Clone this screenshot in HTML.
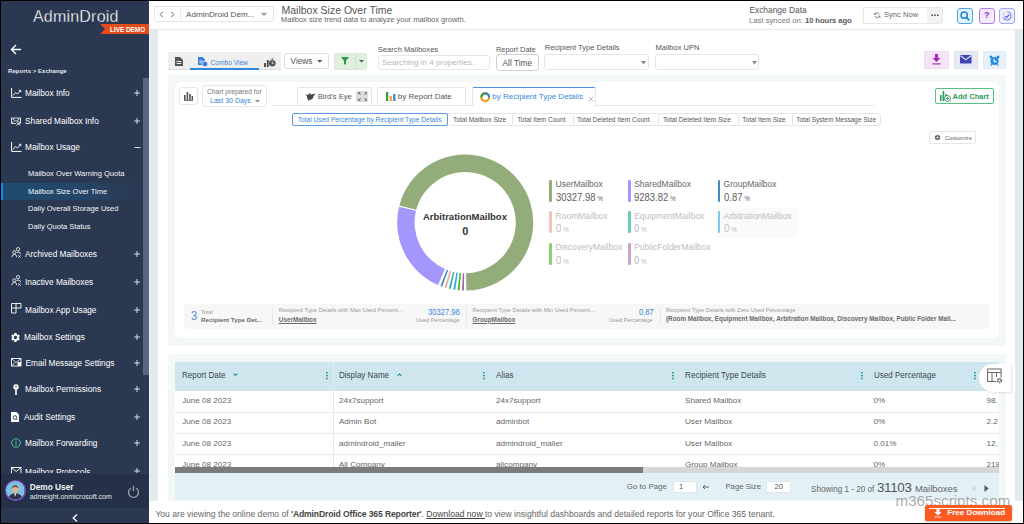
<!DOCTYPE html>
<html><head><meta charset="utf-8">
<style>
*{box-sizing:border-box;margin:0;padding:0}
html,body{width:1024px;height:524px;overflow:hidden;background:#fff;font-family:"Liberation Sans",sans-serif}
#root{position:absolute;left:0;top:0;width:1024px;height:524px;background:#fff;overflow:hidden}
.a{position:absolute}
.t{position:absolute;white-space:nowrap;line-height:1}
#side{position:absolute;left:0;top:0;width:149px;height:524px;background:#2b3851;overflow:hidden}
</style></head><body>
<div id="root">
<!-- MAIN -->
<div class="a" style="left:149px;top:29px;width:1px;height:472px;background:#eef3f5"></div><div class="a" style="left:150px;top:29px;width:8px;height:472px;background:#e2eaed"></div>
<div class="a" style="left:1015px;top:29px;width:8px;height:472px;background:#e3eaed"></div>
<!-- HEADER -->
<div class="a" style="left:149px;top:0;width:874px;height:29px;background:#fff;box-shadow:0 1px 1px #e6e9ec"></div>
<div class="a" style="left:154px;top:6px;width:120px;height:16px;border:1px solid #e4e4e4;border-radius:2px;background:#fff"></div>
<div class="a" style="left:180px;top:7px;width:1px;height:14px;background:#ececec"></div>
<svg class="a" style="left:159px;top:11px" width="5" height="7"><path d="M3.8 0.8L1.2 3.5L3.8 6.2" stroke="#666" stroke-width="1" fill="none"/></svg>
<svg class="a" style="left:170px;top:11px" width="5" height="7"><path d="M1.2 0.8L3.8 3.5L1.2 6.2" stroke="#666" stroke-width="1" fill="none"/></svg>
<div class="t" style="left:186px;top:11px;font-size:8.1px;color:#555">AdminDroid Dem...</div>
<svg class="a" style="left:261px;top:13px" width="6" height="4"><path d="M0 0H6L3 3Z" fill="#999"/></svg>
<div class="t" style="left:281.5px;top:4.8px;font-size:10.5px;color:#555">Mailbox Size Over Time</div>
<div class="t" style="left:281px;top:16.2px;font-size:7.5px;color:#666">Mailbox size trend data to analyze your mailbox growth.</div>
<div class="t" style="left:749.4px;top:6.2px;font-size:8.4px;color:#555">Exchange Data</div>
<div class="t" style="left:749px;top:17.4px;font-size:7.7px;color:#777">Last synced on: <b style="color:#5a5a5a;letter-spacing:-0.1px">10 hours ago</b></div>
<div class="a" style="left:863px;top:7px;width:80px;height:17px;border:1px solid #e6e6e6;border-radius:2px;background:#fff"></div>
<div class="a" style="left:927px;top:8px;width:15px;height:15px;background:#f2f2f2"></div>
<svg class="a" style="left:874px;top:12px" width="6.5" height="6.5"><path d="M5.6 2.4A2.6 2.6 0 0 0 1 2.2M0.9 4.1A2.6 2.6 0 0 0 5.5 4.3" stroke="#777" stroke-width="0.9" fill="none"/><path d="M0.6 0.6V2.5H2.4M5.9 5.9V4H4.1" stroke="#777" stroke-width="0.8" fill="none"/></svg>
<div class="t" style="left:884px;top:10.8px;font-size:7.6px;color:#666">Sync Now</div>
<svg class="a" style="left:931px;top:14px" width="8" height="3"><circle cx="1.2" cy="1.2" r="0.9" fill="#555"/><circle cx="4" cy="1.2" r="0.9" fill="#555"/><circle cx="6.8" cy="1.2" r="0.9" fill="#555"/></svg>
<div class="a" style="left:957px;top:8px;width:16px;height:16px;border:1px solid #4aa6df;border-radius:3px;background:#e4f2fb"></div>
<svg class="a" style="left:960px;top:11px" width="10" height="10"><circle cx="4.2" cy="4.2" r="3.1" stroke="#1a86cf" stroke-width="1.5" fill="none"/><path d="M6.5 6.5L9.3 9.3" stroke="#1a86cf" stroke-width="1.7"/></svg>
<div class="a" style="left:979px;top:8px;width:16px;height:16px;border:1px solid #b57ee8;border-radius:3px;background:#f5ebfd"></div>
<div class="t" style="left:984px;top:10.8px;font-size:9px;font-weight:700;color:#8a2be2">?</div>
<div class="a" style="left:999px;top:8px;width:16px;height:16px;border:1px solid #a3a6f2;border-radius:3px;background:#eff0fe"></div>
<svg class="a" style="left:1002px;top:11px" width="10" height="10"><path d="M5 1A4 4 0 1 1 1.3 6.5" stroke="#7c80ea" stroke-width="1.1" fill="none"/><path d="M1.1 4.2A4 4 0 0 1 3 1.5" stroke="#9a9df0" stroke-width="1.1" fill="none" stroke-dasharray="0.9 0.9"/><path d="M3 5.1L4.5 6.6L7.2 3.8" stroke="#5b60dc" stroke-width="1.3" fill="none"/></svg>

<!-- TOOLBAR -->
<div class="a" style="left:168px;top:52px;width:113px;height:18px;background:#efefef;border-bottom:1px solid #dcdcdc"></div>
<div class="a" style="left:190px;top:68px;width:69px;height:2px;background:#2f86de"></div>
<svg class="a" style="left:175px;top:57px" width="8" height="9"><path d="M0 0H5L8 3V9H0Z" fill="#555"/><rect x="1.6" y="4" width="4.8" height="1" fill="#efefef"/><rect x="1.6" y="6" width="4.8" height="1" fill="#efefef"/></svg>
<svg class="a" style="left:198px;top:57px" width="10" height="10"><path d="M0 0H4.5L7 2.5V8H0Z" fill="#3b7fd6"/><circle cx="7" cy="7" r="2.8" fill="#3b7fd6" stroke="#efefef" stroke-width="0.8"/><rect x="1.3" y="3.5" width="3.2" height="0.9" fill="#efefef"/><rect x="1.3" y="5.3" width="2.5" height="0.9" fill="#efefef"/></svg>
<div class="t" style="left:210.6px;top:59.8px;font-size:6.6px;color:#3d87d9">Combo View</div>
<svg class="a" style="left:264px;top:57px" width="12" height="10"><rect x="0" y="6" width="2" height="4" fill="#555"/><rect x="2.8" y="3" width="2" height="7" fill="#555"/><circle cx="8.3" cy="6.2" r="3.3" fill="#555"/><path d="M8.3 4.3V6.4H9.8" stroke="#efefef" stroke-width="0.8" fill="none"/><rect x="7.5" y="1.4" width="1.6" height="1.2" fill="#555"/></svg>
<div class="a" style="left:283.5px;top:52.5px;width:45px;height:16px;border:1px solid #e0e0e0;border-radius:2px;background:#fff"></div>
<div class="t" style="left:290.5px;top:57px;font-size:8.3px;color:#555">Views</div>
<svg class="a" style="left:316.5px;top:59.5px" width="6" height="4"><path d="M0 0H5.5L2.75 2.8Z" fill="#555"/></svg>
<div class="a" style="left:334px;top:52.5px;width:33px;height:17px;background:#e0f0df;border:1px solid #d8ead6;border-radius:2px"></div>
<div class="a" style="left:355px;top:53px;width:1px;height:16px;background:#cfe3cd"></div>
<svg class="a" style="left:341px;top:57px" width="8" height="8"><path d="M0 0H8L5 3.8V8L3 6.8V3.8Z" fill="#2b9a3a"/></svg>
<svg class="a" style="left:359px;top:60px" width="5" height="3"><path d="M0 0H5L2.5 2.5Z" fill="#555"/></svg>

<div class="t" style="left:377.8px;top:46.4px;font-size:7.6px;color:#555">Search Mailboxes</div>
<div class="a" style="left:378px;top:55px;width:111.5px;height:15.4px;border:1px solid #e6e6e6;border-radius:3px;background:#fff"></div>
<div class="t" style="left:382px;top:59.3px;font-size:8.1px;color:#b8b8b8">Searching in 4 properties.</div>
<div class="t" style="left:496px;top:45.8px;font-size:7.35px;color:#555">Report Date</div>
<div class="a" style="left:495.5px;top:54.4px;width:43px;height:16.5px;border:1px solid #d0d0d0;border-radius:3px;background:#fff"></div>
<div class="t" style="left:502.5px;top:58.5px;font-size:8.3px;color:#555">All Time</div>
<div class="t" style="left:544.7px;top:43.8px;font-size:7.55px;color:#555">Recipient Type Details</div>
<div class="a" style="left:544.4px;top:54.4px;width:105px;height:16px;border:1px solid #e6e6e6;border-radius:3px;background:#fff"></div>
<svg class="a" style="left:641px;top:61px" width="5" height="4"><path d="M0 0H5L2.5 3.5Z" fill="#888"/></svg>
<div class="t" style="left:655.6px;top:43.8px;font-size:7.5px;color:#555">Mailbox UPN</div>
<div class="a" style="left:655.3px;top:54.4px;width:104px;height:16px;border:1px solid #e6e6e6;border-radius:3px;background:#fff"></div>
<svg class="a" style="left:751.5px;top:61px" width="5" height="4"><path d="M0 0H5L2.5 3.5Z" fill="#888"/></svg>

<div class="a" style="left:924.3px;top:51px;width:24.6px;height:17.6px;background:#f5e4f8;border:1px solid #efdcf2;border-radius:1px"></div>
<svg class="a" style="left:932px;top:54px" width="9" height="11"><path d="M3 0H6V4H8.5L4.5 8L0.5 4H3Z" fill="#a42bb6"/><rect x="0.5" y="9.3" width="8" height="1.2" fill="#a42bb6"/></svg>
<div class="a" style="left:954px;top:51px;width:23.8px;height:17.6px;background:#e7e8f5;border:1px solid #dfe0f0;border-radius:1px"></div>
<svg class="a" style="left:960px;top:55px" width="12" height="9"><rect x="0" y="0" width="11.5" height="8.5" rx="0.8" fill="#3d45b5"/><path d="M0.5 0.8L5.75 4.6L11 0.8" stroke="#e7e8f5" stroke-width="1.1" fill="none"/></svg>
<div class="a" style="left:982.6px;top:51px;width:23.4px;height:17.6px;background:#e6f1fb;border:1px solid #deebf7;border-radius:1px"></div>
<svg class="a" style="left:988.5px;top:54.5px" width="11" height="11"><circle cx="5.5" cy="6" r="4.1" fill="#2a8ae2"/><circle cx="2" cy="2" r="1.5" fill="#2a8ae2"/><circle cx="9" cy="2" r="1.5" fill="#2a8ae2"/><path d="M5.2 3.8V6.6H7.6" stroke="#e6f1fb" stroke-width="1.3" fill="none"/><path d="M2.8 9.3L1.8 10.5M8.2 9.3L9.2 10.5" stroke="#2a8ae2" stroke-width="1.2"/></svg>

<!-- CHART CARD -->
<div class="a" style="left:168px;top:75px;width:838px;height:271px;background:#f3f7f8;border-radius:1px"></div>
<div class="a" style="left:175px;top:82px;width:824px;height:256px;background:#fff;border-radius:6px"></div>
<div class="a" style="left:179px;top:87.3px;width:19px;height:17.5px;border:1px solid #e6e6e6;border-radius:3px;background:#fff"></div>
<svg class="a" style="left:184px;top:91px" width="9" height="10"><rect x="0" y="4" width="1.6" height="5" fill="#555"/><rect x="2.6" y="1" width="1.6" height="8" fill="#555"/><rect x="5.2" y="3" width="1.6" height="6" fill="#555"/><rect x="7.6" y="5" width="1.4" height="4" fill="#555"/><rect x="0" y="9" width="9" height="0.8" fill="#555"/></svg>
<div class="a" style="left:201.5px;top:85.3px;width:65.5px;height:21.4px;border:1px solid #e8e8e8;border-radius:3px;background:#fff"></div>
<div class="t" style="left:207px;top:88.5px;font-size:6.7px;color:#777">Chart prepared for</div>
<div class="t" style="left:210px;top:96.6px;font-size:7px;color:#3d87d9">Last 30 Days</div>
<svg class="a" style="left:255px;top:99.5px" width="5" height="3"><path d="M0 0H5L2.5 2.5Z" fill="#888"/></svg>
<div class="a" style="left:271px;top:105px;width:604px;height:1px;background:#e6e6e6"></div>
<div class="a" style="left:296.6px;top:86.6px;width:75px;height:18.4px;border:1px solid #e6e6e6;border-bottom:none;border-radius:2px 2px 0 0;background:#fff"></div>
<svg class="a" style="left:304.5px;top:91.5px" width="11" height="9"><path d="M0 2.5L3 3L4.5 1L6 2.5L10.5 1.5L8.5 4.5Q8 7.5 4.5 8L3.5 9L3 7.5Q1.5 6 2 4Z" fill="#4a4a4a"/></svg>
<div class="t" style="left:317.8px;top:92.8px;font-size:7.6px;color:#555">Bird's Eye</div>
<div class="a" style="left:356.4px;top:91px;width:11.4px;height:10.6px;background:#dedede;border-radius:1px"></div>
<svg class="a" style="left:357.5px;top:92px" width="9" height="9"><path d="M0.8 0.8L3 3M8.2 0.8L6 3M0.8 8.2L3 6M8.2 8.2L6 6" stroke="#777" stroke-width="0.9"/><path d="M0.5 0.5H2.5M0.5 0.5V2.5M8.5 0.5H6.5M8.5 0.5V2.5M0.5 8.5H2.5M0.5 8.5V6.5M8.5 8.5H6.5M8.5 8.5V6.5" stroke="#777" stroke-width="0.9"/></svg>
<div class="a" style="left:377px;top:86.6px;width:89px;height:18.4px;border:1px solid #e6e6e6;border-bottom:none;border-radius:2px 2px 0 0;background:#fff"></div>
<svg class="a" style="left:385.6px;top:91px" width="10" height="10"><rect x="0" y="1" width="2.2" height="9" fill="#2e9c3c"/><rect x="3.6" y="5" width="2.2" height="5" fill="#f59a23"/><rect x="7.2" y="3" width="2.2" height="7" fill="#2f86de"/></svg>
<div class="t" style="left:397.8px;top:92.8px;font-size:8px;color:#555">by Report Date</div>
<div class="a" style="left:471.7px;top:87px;width:124.5px;height:19px;border:1px solid #e6e6e6;border-top:1.6px solid #4a90e2;border-bottom:none;border-radius:2px 2px 0 0;background:#fff"></div>
<svg class="a" style="left:479.8px;top:92px" width="10.5" height="10.5"><circle cx="5.25" cy="5.25" r="3.9" stroke="#f59a23" stroke-width="2.2" fill="none"/><path d="M1.35 5.25A3.9 3.9 0 0 1 5.25 1.35" stroke="#2e9c3c" stroke-width="2.2" fill="none"/><path d="M5.25 1.35A3.9 3.9 0 0 1 9.15 5.25" stroke="#2f86de" stroke-width="2.2" fill="none"/></svg>
<div class="t" style="left:492.3px;top:93.3px;font-size:8.05px;color:#3d87d9">by Recipient Type Details</div>
<svg class="a" style="left:587.5px;top:95.5px" width="6" height="6"><path d="M0.8 0.8L5.2 5.2M5.2 0.8L0.8 5.2" stroke="#aaa" stroke-width="0.8"/></svg>
<div class="a" style="left:935.4px;top:87.5px;width:58.6px;height:16.5px;border:1px solid #56c27f;border-radius:2px;background:#fff"></div>
<svg class="a" style="left:940px;top:90px" width="11" height="12"><rect x="0" y="5" width="1.6" height="6" fill="#2d9b57"/><rect x="2.6" y="1" width="1.6" height="10" fill="#2d9b57"/><rect x="5.2" y="4" width="1.6" height="4" fill="#2d9b57"/><circle cx="7.5" cy="8.5" r="3" fill="#fff" stroke="#2d9b57" stroke-width="1"/><path d="M7.5 7V10M6 8.5H9" stroke="#2d9b57" stroke-width="0.9"/></svg>
<div class="t" style="left:952.6px;top:93.2px;font-size:7.5px;font-weight:700;color:#2d9b57">Add Chart</div>

<!-- metric tabs -->
<div class="a" style="left:292px;top:113.2px;width:589.3px;height:12.6px;border:1px solid #e6e6e6;border-radius:3px;background:#fff"></div>
<div class="a" style="left:292px;top:113.2px;width:155.7px;height:12.6px;border:1px solid #5a9be6;border-radius:2px;background:#fff"></div>
<div class="t" style="left:297.7px;top:117.2px;font-size:6.65px;color:#3d87d9">Total Used Percentage by Recipient Type Details</div>
<div class="t" style="left:452.9px;top:117.2px;font-size:6.63px;color:#555">Total Mailbox Size</div>
<div class="a" style="left:511.5px;top:115px;width:1px;height:9px;background:#e2e2e2"></div>
<div class="t" style="left:517.5px;top:117.2px;font-size:6.6px;color:#555">Total Item Count</div>
<div class="a" style="left:572.7px;top:115px;width:1px;height:9px;background:#e2e2e2"></div>
<div class="t" style="left:577px;top:117.2px;font-size:6.6px;color:#555">Total Deleted Item Count</div>
<div class="a" style="left:658.3px;top:115px;width:1px;height:9px;background:#e2e2e2"></div>
<div class="t" style="left:663px;top:117.2px;font-size:6.6px;color:#555">Total Deleted Item Size</div>
<div class="a" style="left:737.5px;top:115px;width:1px;height:9px;background:#e2e2e2"></div>
<div class="t" style="left:742.3px;top:117.2px;font-size:6.6px;color:#555">Total Item Size</div>
<div class="a" style="left:791.6px;top:115px;width:1px;height:9px;background:#e2e2e2"></div>
<div class="t" style="left:796.2px;top:117.2px;font-size:6.5px;color:#555">Total System Message Size</div>
<div class="a" style="left:929.4px;top:131px;width:46.8px;height:13.3px;border:1px solid #e6e6e6;border-radius:2px;background:#fff"></div>
<svg class="a" style="left:934px;top:134px" width="7" height="7" viewBox="0 0 24 24"><path fill="#555" d="M19.14 12.94c.04-.3.06-.61.06-.94 0-.32-.02-.64-.07-.94l2.03-1.58a.49.49 0 0 0 .12-.61l-1.92-3.32a.49.49 0 0 0-.59-.22l-2.39.96c-.5-.38-1.03-.7-1.62-.94l-.36-2.54a.48.48 0 0 0-.48-.41h-3.84c-.24 0-.43.17-.47.41l-.36 2.54c-.59.24-1.130.57-1.62.94l-2.39-.96a.48.48 0 0 0-.59.22L2.74 8.87c-.12.21-.08.47.12.61l2.03 1.58c-.05.3-.09.63-.09.94s.02.64.07.94l-2.03 1.58a.49.49 0 0 0-.12.61l1.92 3.32c.12.22.37.29.59.22l2.39-.96c.5.38 1.030.7 1.62.94l.36 2.54c.05.24.24.41.48.41h3.84c.24 0 .44-.17.47-.41l.36-2.54c.59-.24 1.13-.56 1.62-.94l2.39.96c.22.08.47 0 .59-.22l1.92-3.32c.12-.22.07-.47-.12-.61l-2.01-1.58zM12 15.6A3.6 3.6 0 1 1 12 8.4a3.6 3.6 0 0 1 0 7.2z"/></svg>
<div class="t" style="left:945px;top:136.2px;font-size:5.7px;color:#666">Customize</div>

<!-- donut -->
<svg class="a" style="left:0;top:0" width="1024" height="524"><path d="M399.40 205.46A68 68 0 1 1 466.39 290.59L466.08 273.19A50.6 50.6 0 1 0 416.23 209.85Z" fill="#93ad7a"/><path d="M437.98 284.91A68 68 0 0 1 399.05 206.84L415.98 210.87A50.6 50.6 0 0 0 444.94 268.97Z" fill="#a396fd"/><path d="M442.28 286.62A68 68 0 0 1 440.50 285.96L446.82 269.74A50.6 50.6 0 0 0 448.14 270.24Z" fill="#3b8cc0"/><path d="M446.46 287.97A68 68 0 0 1 444.64 287.42L449.90 270.83A50.6 50.6 0 0 0 451.25 271.24Z" fill="#f0a496"/><path d="M450.71 289.04A68 68 0 0 1 448.86 288.61L453.04 271.72A50.6 50.6 0 0 0 454.42 272.04Z" fill="#2fb3a6"/><path d="M455.27 289.87A68 68 0 0 1 453.39 289.57L456.41 272.43A50.6 50.6 0 0 0 457.81 272.66Z" fill="#2fa6ee"/><path d="M459.51 290.36A68 68 0 0 1 457.62 290.18L459.56 272.88A50.6 50.6 0 0 0 460.97 273.02Z" fill="#46b52e"/><path d="M463.89 290.59A68 68 0 0 1 462.00 290.52L462.82 273.14A50.6 50.6 0 0 0 464.23 273.19Z" fill="#a566a8"/></svg>
<div class="t" style="left:423px;top:212px;font-size:9.5px;font-weight:700;color:#333">ArbitrationMailbox</div>
<div class="t" style="left:462.2px;top:226px;font-size:11px;font-weight:700;color:#333">0</div>
<div class="a" style="left:715.5px;top:207.5px;width:81px;height:30px;background:#fafafa"></div>
<div class="a" style="left:549.4px;top:180px;width:2.6px;height:21.6px;background:#93ad7a;border-radius:1.3px"></div>
<div class="t" style="left:555.6px;top:180.3px;font-size:8.5px;color:#666">UserMailbox</div>
<div class="t" style="left:555.6px;top:192.5px;font-size:10.3px;transform:scaleX(0.92);transform-origin:0 0;color:#5e5e5e">30327.98<span style="font-size:7px;margin-left:2px">%</span></div>
<div class="a" style="left:628px;top:180px;width:2.6px;height:21.6px;background:#a396fd;border-radius:1.3px"></div>
<div class="t" style="left:634.2px;top:180.3px;font-size:8.5px;color:#666">SharedMailbox</div>
<div class="t" style="left:634.2px;top:192.5px;font-size:10.3px;transform:scaleX(0.92);transform-origin:0 0;color:#5e5e5e">9283.82<span style="font-size:7px;margin-left:2px">%</span></div>
<div class="a" style="left:717.9px;top:180px;width:2.6px;height:21.6px;background:#3b8cc0;border-radius:1.3px"></div>
<div class="t" style="left:723.6px;top:180.3px;font-size:8.5px;color:#666">GroupMailbox</div>
<div class="t" style="left:723.6px;top:192.5px;font-size:10.3px;transform:scaleX(0.92);transform-origin:0 0;color:#5e5e5e">0.87<span style="font-size:7px;margin-left:2px">%</span></div>
<div class="a" style="left:549.4px;top:211.3px;width:2.6px;height:21.6px;background:#f3c3b9;border-radius:1.3px"></div>
<div class="t" style="left:555.6px;top:211.60000000000002px;font-size:8.5px;color:#bdbdbd">RoomMailbox</div>
<div class="t" style="left:555.6px;top:223.8px;font-size:10.3px;transform:scaleX(0.92);transform-origin:0 0;color:#bdbdbd">0<span style="font-size:7px;margin-left:2px">%</span></div>
<div class="a" style="left:628px;top:211.3px;width:2.6px;height:21.6px;background:#6ecabd;border-radius:1.3px"></div>
<div class="t" style="left:634.2px;top:211.60000000000002px;font-size:8.5px;color:#bdbdbd">EquipmentMailbox</div>
<div class="t" style="left:634.2px;top:223.8px;font-size:10.3px;transform:scaleX(0.92);transform-origin:0 0;color:#bdbdbd">0<span style="font-size:7px;margin-left:2px">%</span></div>
<div class="a" style="left:717.9px;top:211.3px;width:2.6px;height:21.6px;background:#7dc9f2;border-radius:1.3px"></div>
<div class="t" style="left:723.6px;top:211.60000000000002px;font-size:8.5px;color:#bdbdbd">ArbitrationMailbox</div>
<div class="t" style="left:723.6px;top:223.8px;font-size:10.3px;transform:scaleX(0.92);transform-origin:0 0;color:#bdbdbd">0<span style="font-size:7px;margin-left:2px">%</span></div>
<div class="a" style="left:549.4px;top:243px;width:2.6px;height:21.6px;background:#8bd078;border-radius:1.3px"></div>
<div class="t" style="left:555.6px;top:243.3px;font-size:8.5px;color:#bdbdbd">DiscoveryMailbox</div>
<div class="t" style="left:555.6px;top:255.5px;font-size:10.3px;transform:scaleX(0.92);transform-origin:0 0;color:#bdbdbd">0<span style="font-size:7px;margin-left:2px">%</span></div>
<div class="a" style="left:628px;top:243px;width:2.6px;height:21.6px;background:#c9a2c9;border-radius:1.3px"></div>
<div class="t" style="left:634.2px;top:243.3px;font-size:8.5px;color:#bdbdbd">PublicFolderMailbox</div>
<div class="t" style="left:634.2px;top:255.5px;font-size:10.3px;transform:scaleX(0.92);transform-origin:0 0;color:#bdbdbd">0<span style="font-size:7px;margin-left:2px">%</span></div>

<!-- summary strip -->
<div class="a" style="left:183.8px;top:303.5px;width:805px;height:25.3px;background:#f7f7f7;border-radius:4px"></div>
<div class="t" style="left:190.8px;top:309px;font-size:13.6px;transform:scaleX(0.82);transform-origin:0 0;color:#5a8ad8">3</div>
<div class="t" style="left:201px;top:310.3px;font-size:5.5px;color:#999">Total</div>
<div class="t" style="left:201px;top:316.5px;font-size:6.25px;font-weight:700;color:#6a6a6a">Recipient Type Det...</div>
<div class="a" style="left:271.6px;top:307px;width:1px;height:18px;background:#e8e8e8"></div>
<div class="t" style="left:278.8px;top:308.4px;font-size:5.8px;color:#9a9a9a">Recipient Type Details with Max Used Percent...</div>
<div class="t" style="left:278.8px;top:316.6px;font-size:6.35px;font-weight:700;color:#6a6a6a;text-decoration:underline">UserMailbox</div>
<div class="t" style="left:428px;top:307.7px;font-size:8.6px;transform:scaleX(0.886);transform-origin:0 0;color:#3d87d9">30327.98</div>
<div class="t" style="left:416px;top:318px;font-size:5.67px;color:#999">Used Percentage</div>
<div class="a" style="left:466px;top:307px;width:1px;height:18px;background:#e8e8e8"></div>
<div class="t" style="left:472.6px;top:308.4px;font-size:5.8px;color:#9a9a9a">Recipient Type Details with Min Used Percent...</div>
<div class="t" style="left:472.6px;top:316.6px;font-size:6.35px;font-weight:700;color:#6a6a6a;text-decoration:underline">GroupMailbox</div>
<div class="t" style="left:638.8px;top:307.7px;font-size:8.6px;transform:scaleX(0.886);transform-origin:0 0;color:#3d87d9">0.87</div>
<div class="t" style="left:609px;top:318px;font-size:5.67px;color:#999">Used Percentage</div>
<div class="a" style="left:659.6px;top:307px;width:1px;height:18px;background:#e8e8e8"></div>
<div class="t" style="left:666px;top:308.4px;font-size:5.8px;color:#9a9a9a">Recipient Type Details with Zero Used Percentage</div>
<div class="t" style="left:666px;top:316px;font-size:6.33px;font-weight:700;color:#6a6a6a">(Room Mailbox, Equipment Mailbox, Arbitration Mailbox, Discovery Mailbox, Public Folder Mail...</div>

<!-- TABLE -->
<div class="a" style="left:167.5px;top:354.4px;width:838.3px;height:147px;background:#f3f7f8;border-radius:1px"></div>
<div class="a" style="left:175.25px;top:362.2px;width:823.4px;height:28.7px;background:#cfe6ee"></div>
<div class="a" style="left:175.25px;top:390.9px;width:823.4px;height:76.3px;background:#fff"></div>
<div class="a" style="left:175.25px;top:411.9px;width:823.4px;height:1px;background:#ebebeb"></div>
<div class="a" style="left:175.25px;top:432.9px;width:823.4px;height:1px;background:#ebebeb"></div>
<div class="a" style="left:175.25px;top:453.9px;width:823.4px;height:1px;background:#ebebeb"></div>
<div class="a" style="left:333px;top:362.2px;width:1px;height:105px;background:#e3e8ea"></div>
<div class="a" style="left:333px;top:362.2px;width:1px;height:28.7px;background:#dbeef4"></div>
<div class="t" style="left:182.4px;top:370.6px;font-size:9.2px;transform:scaleX(0.878);transform-origin:0 0;color:#3c4650">Report Date</div>
<div class="t" style="left:338.9px;top:370.6px;font-size:9.2px;transform:scaleX(0.876);transform-origin:0 0;color:#3c4650">Display Name</div>
<div class="t" style="left:496px;top:370.6px;font-size:9.2px;transform:scaleX(0.880);transform-origin:0 0;color:#3c4650">Alias</div>
<div class="t" style="left:685px;top:370.6px;font-size:9.2px;transform:scaleX(0.887);transform-origin:0 0;color:#3c4650">Recipient Type Details</div>
<div class="t" style="left:873.6px;top:370.6px;font-size:9.2px;transform:scaleX(0.873);transform-origin:0 0;color:#3c4650">Used Percentage</div>
<svg class="a" style="left:326px;top:371.5px" width="2" height="8"><rect x="0.1" y="0" width="1.5" height="1.5" fill="#0e8a8a"/><rect x="0.1" y="2.9" width="1.5" height="1.5" fill="#0e8a8a"/><rect x="0.1" y="5.8" width="1.5" height="1.5" fill="#0e8a8a"/></svg>
<svg class="a" style="left:483.2px;top:371.5px" width="2" height="8"><rect x="0.1" y="0" width="1.5" height="1.5" fill="#0e8a8a"/><rect x="0.1" y="2.9" width="1.5" height="1.5" fill="#0e8a8a"/><rect x="0.1" y="5.8" width="1.5" height="1.5" fill="#0e8a8a"/></svg>
<svg class="a" style="left:671.8px;top:371.5px" width="2" height="8"><rect x="0.1" y="0" width="1.5" height="1.5" fill="#0e8a8a"/><rect x="0.1" y="2.9" width="1.5" height="1.5" fill="#0e8a8a"/><rect x="0.1" y="5.8" width="1.5" height="1.5" fill="#0e8a8a"/></svg>
<svg class="a" style="left:860.6px;top:371.5px" width="2" height="8"><rect x="0.1" y="0" width="1.5" height="1.5" fill="#0e8a8a"/><rect x="0.1" y="2.9" width="1.5" height="1.5" fill="#0e8a8a"/><rect x="0.1" y="5.8" width="1.5" height="1.5" fill="#0e8a8a"/></svg>
<svg class="a" style="left:973.6px;top:371.5px" width="2" height="8"><rect x="0.1" y="0" width="1.5" height="1.5" fill="#0e8a8a"/><rect x="0.1" y="2.9" width="1.5" height="1.5" fill="#0e8a8a"/><rect x="0.1" y="5.8" width="1.5" height="1.5" fill="#0e8a8a"/></svg>
<svg class="a" style="left:233px;top:373px" width="5" height="3.5"><path d="M0.6 0.6L2.5 2.5L4.4 0.6" stroke="#1a9a9a" stroke-width="1.2" fill="none"/></svg>
<svg class="a" style="left:396.5px;top:373px" width="5" height="3.5"><path d="M0.6 2.9L2.5 1L4.4 2.9" stroke="#1a9a9a" stroke-width="1.2" fill="none"/></svg>
<div class="t" style="left:182.3px;top:396.50px;font-size:8.1px;color:#666">June 08 2023</div>
<div class="t" style="left:338.9px;top:396.50px;font-size:8.1px;color:#666">24x7support</div>
<div class="t" style="left:496px;top:396.50px;font-size:8.1px;color:#666">24x7support</div>
<div class="t" style="left:685px;top:396.50px;font-size:8.1px;color:#666">Shared Mailbox</div>
<div class="t" style="left:873.6px;top:396.50px;font-size:8.1px;color:#666">0%</div>
<div class="t" style="left:986.6px;top:396.50px;font-size:8.1px;color:#666">98.</div>
<div class="t" style="left:182.3px;top:418.00px;font-size:8.1px;color:#666">June 08 2023</div>
<div class="t" style="left:338.9px;top:418.00px;font-size:8.1px;color:#666">Admin Bot</div>
<div class="t" style="left:496px;top:418.00px;font-size:8.1px;color:#666">adminbot</div>
<div class="t" style="left:685px;top:418.00px;font-size:8.1px;color:#666">User Mailbox</div>
<div class="t" style="left:873.6px;top:418.00px;font-size:8.1px;color:#666">0%</div>
<div class="t" style="left:986.6px;top:418.00px;font-size:8.1px;color:#666">2.2</div>
<div class="t" style="left:182.3px;top:439.50px;font-size:8.1px;color:#666">June 08 2023</div>
<div class="t" style="left:338.9px;top:439.50px;font-size:8.1px;color:#666">admindroid_mailer</div>
<div class="t" style="left:496px;top:439.50px;font-size:8.1px;color:#666">admindroid_mailer</div>
<div class="t" style="left:685px;top:439.50px;font-size:8.1px;color:#666">User Mailbox</div>
<div class="t" style="left:873.6px;top:439.50px;font-size:8.1px;color:#666">0.01%</div>
<div class="t" style="left:986.6px;top:439.50px;font-size:8.1px;color:#666">12.</div>
<div class="t" style="left:182.3px;top:461.00px;font-size:8.1px;color:#666">June 08 2023</div>
<div class="t" style="left:338.9px;top:461.00px;font-size:8.1px;color:#666">All Company</div>
<div class="t" style="left:496px;top:461.00px;font-size:8.1px;color:#666">allcompany</div>
<div class="t" style="left:685px;top:461.00px;font-size:8.1px;color:#666">Group Mailbox</div>
<div class="t" style="left:873.6px;top:461.00px;font-size:8.1px;color:#666">0%</div>
<div class="t" style="left:986.6px;top:461.00px;font-size:8.1px;color:#666">218</div>

<div class="a" style="left:175.25px;top:467px;width:823.4px;height:6px;background:#d6d6d6"></div>
<div class="a" style="left:175.25px;top:467px;width:467.75px;height:6px;background:#7b7b7b"></div>
<div class="a" style="left:998.6px;top:362px;width:7.2px;height:140px;background:#f3f7f8"></div>
<div class="a" style="left:175.25px;top:473px;width:823.4px;height:27px;background:#e3f0f6"></div>
<div class="t" style="left:626.8px;top:483.1px;font-size:7.95px;color:#666">Go to Page</div>
<div class="a" style="left:672.7px;top:481.3px;width:24.6px;height:11.4px;background:#fff;border:1px solid #dde6ea;border-radius:2px"></div>
<div class="t" style="left:679px;top:483px;font-size:7.5px;color:#555">1</div>
<svg class="a" style="left:701.5px;top:483.5px" width="7.5" height="6"><path d="M7 3H1M3 1L1 3L3 5" stroke="#555" stroke-width="0.9" fill="none"/></svg>
<div class="t" style="left:725.4px;top:483.1px;font-size:7.84px;color:#666">Page Size</div>
<div class="a" style="left:766.4px;top:481.3px;width:24.6px;height:11.4px;background:#fff;border:1px solid #dde6ea;border-radius:2px"></div>
<div class="t" style="left:774.5px;top:483px;font-size:7.5px;color:#555">20</div>
<div class="t" style="left:811px;top:485.7px;font-size:8.15px;color:#666">Showing 1 - 20 of</div>
<div class="t" style="left:877px;top:481.2px;font-size:13.4px;letter-spacing:-0.35px;color:#555">31103</div>
<div class="t" style="left:914.9px;top:483.8px;font-size:9.47px;color:#666">Mailboxes</div>
<svg class="a" style="left:970.5px;top:485px" width="5" height="7"><path d="M4.5 0L0.5 3.5L4.5 7Z" fill="#cfd8dc"/></svg>
<svg class="a" style="left:983.8px;top:485px" width="5" height="7"><path d="M0.5 0L4.5 3.5L0.5 7Z" fill="#555"/></svg>
<!-- column settings pill -->
<div class="a" style="left:978.6px;top:363.8px;width:32px;height:28px;background:#fff;border-radius:14px 0 0 14px;box-shadow:1px 1px 2px rgba(0,0,0,0.12)"></div>
<svg class="a" style="left:987px;top:368px" width="17" height="17"><rect x="0.6" y="1" width="13.5" height="12.5" stroke="#666" stroke-width="1" fill="none"/><path d="M0.6 4.5H14M5 4.5V13.5M9.5 4.5V9" stroke="#666" stroke-width="1" fill="none"/><circle cx="12.5" cy="12.5" r="3.4" fill="#fff"/><circle cx="12.5" cy="12.5" r="2" stroke="#666" stroke-width="1.6" fill="none" stroke-dasharray="1.2 0.9"/><circle cx="12.5" cy="12.5" r="1.4" stroke="#666" stroke-width="0.8" fill="#fff"/></svg>

<!-- BOTTOM BAR -->
<div class="a" style="left:149px;top:500.5px;width:874px;height:23px;background:#fff"></div>
<div class="t" style="left:155.4px;top:510.2px;font-size:8.59px;color:#666">You are viewing the online demo of <b style="color:#444;letter-spacing:-0.13px">'AdminDroid Office 365 Reporter'</b>. <u style="color:#444">Download now </u>to view insightful dashboards and detailed reports for your Office 365 tenant.</div>
<div class="t" style="left:895.5px;top:492.9px;font-size:15.2px;color:rgba(140,140,140,0.72)">m365scripts.com</div>
<div class="a" style="left:924.7px;top:504.6px;width:87.5px;height:16.2px;background:#fd5a22;border-radius:2px;box-shadow:0 1px 2px rgba(0,0,0,0.25)"></div>
<div class="a" style="left:928.5px;top:508px;width:76.5px;height:1px;background:#fff"></div>
<svg class="a" style="left:934px;top:509px" width="8" height="9"><path d="M2.5 0H5.5V3H7.5L4 6.5L0.5 3H2.5Z" fill="#fff"/><rect x="0.5" y="7.5" width="7" height="1" fill="#fff" opacity="0.7"/></svg>
<div class="t" style="left:947.2px;top:508.6px;font-size:8.1px;font-weight:700;color:#fff">Free Download</div>
<!-- SIDEBAR -->
<div id="side">
  <div class="t" style="left:33px;top:9px;font-size:16px;color:#fff;letter-spacing:0.2px;-webkit-text-stroke:0.3px #2b3851">AdminDroid</div>
  <svg class="a" style="left:100px;top:24px" width="49" height="10"><path d="M0 0H49V10H0L5 5Z" fill="#e44c1c"/><text x="10" y="7.6" font-family="Liberation Sans" font-weight="700" font-size="6.4" fill="#fff">LIVE DEMO</text></svg>
  <svg class="a" style="left:10px;top:44px" width="12" height="11"><path d="M11 5.5H1.5M6 1L1.5 5.5L6 10" stroke="#fff" stroke-width="1.4" fill="none"/></svg>
  <div class="t" style="left:8px;top:68px;font-size:6.1px;color:#e6e9ee;font-weight:700">Reports &gt; Exchange</div>
  <div class="a" style="left:143px;top:78px;width:6px;height:297px;background:#56667f"></div>
  <div class="a" style="left:1px;top:183px;width:142px;height:17px;background:linear-gradient(90deg,#1f4b70 0%,#24466a 50%,#2b3851 100%)"></div>
  <div class="a" style="left:1px;top:183px;width:2px;height:17px;background:#1e88e5"></div>
<div class="t" style="left:25px;top:89.0px;font-size:8.3px;color:#fff">Mailbox Info</div>
<svg class="a" style="left:11px;top:88.0px" width="11" height="10"><path d="M0.6 0V9.4H10.5" stroke="#fff" stroke-width="1" fill="none"/><path d="M2 7.5L4.5 4.5L6.5 6L9.5 2.5M7.8 2.3H9.7V4.2" stroke="#fff" stroke-width="0.9" fill="none"/></svg>
<svg class="a" style="left:134px;top:90.0px" width="6" height="6"><path d="M3 0V6M0 3H6" stroke="#e8ebef" stroke-width="0.9"/></svg>
<div class="t" style="left:25px;top:116.5px;font-size:8.3px;color:#fff">Shared Mailbox Info</div>
<svg class="a" style="left:11px;top:115.5px" width="11" height="10"><path d="M0.5 2H9.5V7.5H6.5M5 7.5H0.5V2" stroke="#fff" stroke-width="0.8" fill="none"/><path d="M0.6 2.2L5 5.2L9.4 2.2M0.6 7.3L3.4 4.6" stroke="#fff" stroke-width="0.7" fill="none"/><circle cx="7.2" cy="6.3" r="1.2" fill="#2b3851" stroke="#fff" stroke-width="0.7"/><path d="M5.3 9.3Q7.2 7.3 9.2 9.3" stroke="#fff" stroke-width="0.7" fill="none"/></svg>
<svg class="a" style="left:134px;top:117.5px" width="6" height="6"><path d="M3 0V6M0 3H6" stroke="#e8ebef" stroke-width="0.9"/></svg>
<div class="t" style="left:25px;top:143.0px;font-size:8.3px;color:#fff">Mailbox Usage</div>
<svg class="a" style="left:11px;top:142.0px" width="11" height="10"><path d="M0.6 0V9.4H10.5" stroke="#fff" stroke-width="1" fill="none"/><path d="M2 7.5L4.5 4.5L6.5 6L9.5 2.5M7.8 2.3H9.7V4.2" stroke="#fff" stroke-width="0.9" fill="none"/></svg>
<svg class="a" style="left:133.5px;top:143.5px" width="7" height="7"><path d="M0.5 3.5H6.5" stroke="#e8ebef" stroke-width="0.9"/></svg>
<div class="t" style="left:25px;top:249.5px;font-size:8.3px;color:#fff">Archived Mailboxes</div>
<svg class="a" style="left:11px;top:247.0px" width="11" height="11"><circle cx="7" cy="2.2" r="1.7" stroke="#fff" stroke-width="0.8" fill="none"/><path d="M5.6 5.6Q7 4.4 9.2 5.8V7.2" stroke="#fff" stroke-width="0.8" fill="none"/><circle cx="3.3" cy="5.3" r="1.6" stroke="#fff" stroke-width="0.8" fill="none"/><path d="M0.7 10.2Q1 7.4 3.3 7.4Q5.6 7.4 5.9 10.2" stroke="#fff" stroke-width="0.8" fill="none"/><path d="M7.3 8.3L9.7 10.7M9.7 8.3L7.3 10.7" stroke="#fff" stroke-width="0.8"/></svg>
<svg class="a" style="left:134px;top:250.5px" width="6" height="6"><path d="M3 0V6M0 3H6" stroke="#e8ebef" stroke-width="0.9"/></svg>
<div class="t" style="left:25px;top:277.5px;font-size:8.3px;color:#fff">Inactive Mailboxes</div>
<svg class="a" style="left:11px;top:275.0px" width="11" height="11"><circle cx="7" cy="2.2" r="1.7" stroke="#fff" stroke-width="0.8" fill="none"/><path d="M5.6 5.6Q7 4.4 9.2 5.8V7.2" stroke="#fff" stroke-width="0.8" fill="none"/><circle cx="3.3" cy="5.3" r="1.6" stroke="#fff" stroke-width="0.8" fill="none"/><path d="M0.7 10.2Q1 7.4 3.3 7.4Q5.6 7.4 5.9 10.2" stroke="#fff" stroke-width="0.8" fill="none"/><path d="M7.3 8.3L9.7 10.7M9.7 8.3L7.3 10.7" stroke="#fff" stroke-width="0.8"/></svg>
<svg class="a" style="left:134px;top:278.5px" width="6" height="6"><path d="M3 0V6M0 3H6" stroke="#e8ebef" stroke-width="0.9"/></svg>
<div class="t" style="left:25px;top:305.5px;font-size:8.3px;color:#fff">Mailbox App Usage</div>
<svg class="a" style="left:11px;top:303px" width="11" height="11"><path d="M0.5 0.5H10V5H5V10H0.5Z M5 0.5V5 M0.5 5H5" stroke="#fff" stroke-width="0.9" fill="none"/></svg>
<svg class="a" style="left:134px;top:306.5px" width="6" height="6"><path d="M3 0V6M0 3H6" stroke="#e8ebef" stroke-width="0.9"/></svg>
<div class="t" style="left:24px;top:333.0px;font-size:8.3px;color:#fff">Mailbox Settings</div>
<svg class="a" style="left:10px;top:331.5px" width="11" height="11" viewBox="0 0 24 24"><path fill="#fff" d="M19.14 12.94c.04-.3.06-.61.06-.94 0-.32-.02-.64-.07-.94l2.03-1.58a.49.49 0 0 0 .12-.61l-1.92-3.32a.49.49 0 0 0-.59-.22l-2.39.96c-.5-.38-1.03-.7-1.62-.94l-.36-2.54a.48.48 0 0 0-.48-.41h-3.84c-.24 0-.43.17-.47.41l-.36 2.54c-.59.24-1.13.57-1.62.94l-2.39-.96a.48.48 0 0 0-.59.22L2.74 8.87c-.12.21-.08.47.12.61l2.03 1.58c-.05.3-.09.63-.09.94s.02.64.07.94l-2.03 1.58a.49.49 0 0 0-.12.61l1.92 3.32c.12.22.37.29.59.22l2.39-.96c.5.38 1.03.7 1.62.94l.36 2.54c.05.24.24.41.48.41h3.84c.24 0 .44-.17.47-.41l.36-2.54c.59-.24 1.13-.56 1.62-.94l2.39.96c.22.08.47 0 .59-.22l1.92-3.32c.12-.22.07-.47-.12-.61l-2.01-1.58zM12 15.6A3.6 3.6 0 1 1 12 8.4a3.6 3.6 0 0 1 0 7.2z"/></svg>
<svg class="a" style="left:134px;top:334.0px" width="6" height="6"><path d="M3 0V6M0 3H6" stroke="#e8ebef" stroke-width="0.9"/></svg>
<div class="t" style="left:25.5px;top:359.0px;font-size:8.3px;color:#fff">Email Message Settings</div>
<svg class="a" style="left:11px;top:358.0px" width="11" height="9"><rect x="0.5" y="0.5" width="9.5" height="7.5" stroke="#fff" stroke-width="0.9" fill="none"/><path d="M0.5 0.5L5 4.5L10 0.5M0.5 8L4 4.5" stroke="#fff" stroke-width="0.8" fill="none"/><rect x="6.5" y="4" width="3.5" height="4" fill="#fff"/></svg>
<svg class="a" style="left:134px;top:360.0px" width="6" height="6"><path d="M3 0V6M0 3H6" stroke="#e8ebef" stroke-width="0.9"/></svg>
<div class="t" style="left:25px;top:385.0px;font-size:8.3px;color:#fff">Mailbox Permissions</div>
<svg class="a" style="left:13px;top:384.0px" width="6" height="11"><circle cx="3" cy="3" r="2.7" fill="#fff"/><rect x="2.2" y="4" width="1.6" height="7" fill="#fff"/><circle cx="3" cy="2.5" r="0.8" fill="#2b3851"/></svg>
<svg class="a" style="left:134px;top:386.0px" width="6" height="6"><path d="M3 0V6M0 3H6" stroke="#e8ebef" stroke-width="0.9"/></svg>
<div class="t" style="left:24px;top:413.0px;font-size:8.3px;color:#fff">Audit Settings</div>
<svg class="a" style="left:11px;top:412.0px" width="8" height="10"><path d="M0 0H5.5L8 2.5V10H0Z" fill="#fff"/><circle cx="4" cy="5.5" r="1.8" stroke="#2b3851" stroke-width="0.9" fill="none"/><path d="M5.2 6.8L6.5 8" stroke="#2b3851" stroke-width="0.9"/></svg>
<svg class="a" style="left:134px;top:414.0px" width="6" height="6"><path d="M3 0V6M0 3H6" stroke="#e8ebef" stroke-width="0.9"/></svg>
<div class="t" style="left:25px;top:439.0px;font-size:8.3px;color:#fff">Mailbox Forwarding</div>
<svg class="a" style="left:11px;top:438.0px" width="10" height="10"><circle cx="5" cy="5" r="4.3" stroke="#4cc39a" stroke-width="1" fill="none"/><rect x="4.5" y="4.2" width="1" height="3.3" fill="#4cc39a"/><rect x="4.5" y="2.5" width="1" height="1" fill="#4cc39a"/></svg>
<svg class="a" style="left:134px;top:440.0px" width="6" height="6"><path d="M3 0V6M0 3H6" stroke="#e8ebef" stroke-width="0.9"/></svg>
<div class="t" style="left:25px;top:467.5px;font-size:8.3px;color:#fff">Mailbox Protocols</div>
<svg class="a" style="left:11px;top:466.5px" width="11" height="9"><rect x="0.5" y="0.5" width="9.5" height="7.5" stroke="#fff" stroke-width="0.9" fill="none"/><path d="M0.5 0.5L5.25 4.5L10 0.5" stroke="#fff" stroke-width="0.9" fill="none"/></svg>
<svg class="a" style="left:134px;top:467.5px" width="6" height="6"><path d="M3 0V6M0 3H6" stroke="#e8ebef" stroke-width="0.9"/></svg>
<div class="t" style="left:28px;top:170.4px;font-size:7.5px;color:#f3f5f8">Mailbox Over Warning Quota</div>
<div class="t" style="left:28px;top:188.4px;font-size:7.5px;color:#f3f5f8">Mailbox Size Over Time</div>
<div class="t" style="left:28px;top:205.4px;font-size:7.5px;color:#f3f5f8">Daily Overall Storage Used</div>
<div class="t" style="left:28px;top:223.4px;font-size:7.5px;color:#f3f5f8">Daily Quota Status</div>
  <div class="a" style="left:0;top:473px;width:149px;height:35px;background:#253149;border-top:1px solid #2e3a55"></div>

  <div class="a" style="left:4.5px;top:480px;width:21px;height:21px;border-radius:50%;background:#7a4fd0"></div>
  <svg class="a" style="left:5.7px;top:481.2px" width="18.6" height="18.6" viewBox="0 0 20 20"><defs><clipPath id="av"><circle cx="10" cy="10" r="10"/></clipPath></defs><g clip-path="url(#av)"><rect width="20" height="20" fill="#7fc1df"/><path d="M2 20Q3 14 10 13Q17 14 18 20Z" fill="#2f3440"/><path d="M8.6 13.2L10 17L11.4 13.2Z" fill="#cfe0ee"/><ellipse cx="10" cy="9" rx="3" ry="3.6" fill="#e9b48c"/><path d="M6.8 8Q7 4.6 10 4.6Q13 4.6 13.2 8Q12 6.2 10 6.4Q8 6.2 6.8 8Z" fill="#6b4a2f"/></g></svg>
  <div class="t" style="left:29.7px;top:483.2px;font-size:8.3px;font-weight:700;color:#f2f4f7">Demo User</div>
  <div class="t" style="left:29.7px;top:493.3px;font-size:7px;color:#e3e7ec">admeight.onmicrosoft.com</div>
  <svg class="a" style="left:126.5px;top:484.5px" width="13" height="13"><path d="M4 3A5 5 0 1 0 9 3" stroke="#9aa1ab" stroke-width="1.3" fill="none"/><path d="M6.5 0.8V6" stroke="#9aa1ab" stroke-width="1.3"/></svg>
  <div class="a" style="left:0;top:508px;width:149px;height:16px;background:#2b3852"></div>
  <svg class="a" style="left:72px;top:514px" width="6" height="8"><path d="M5 0.5L1.2 4L5 7.5" stroke="#fff" stroke-width="1.3" fill="none"/></svg>
</div>
<!-- BORDERS -->
<div class="a" style="left:0;top:0;width:1024px;height:1px;background:#000"></div>
<div class="a" style="left:0;top:0;width:1px;height:524px;background:#000"></div>
<div class="a" style="left:1023px;top:0;width:1px;height:524px;background:#000"></div>
<div class="a" style="left:0;top:523px;width:1024px;height:1px;background:#000"></div>
</div>
</body></html>
